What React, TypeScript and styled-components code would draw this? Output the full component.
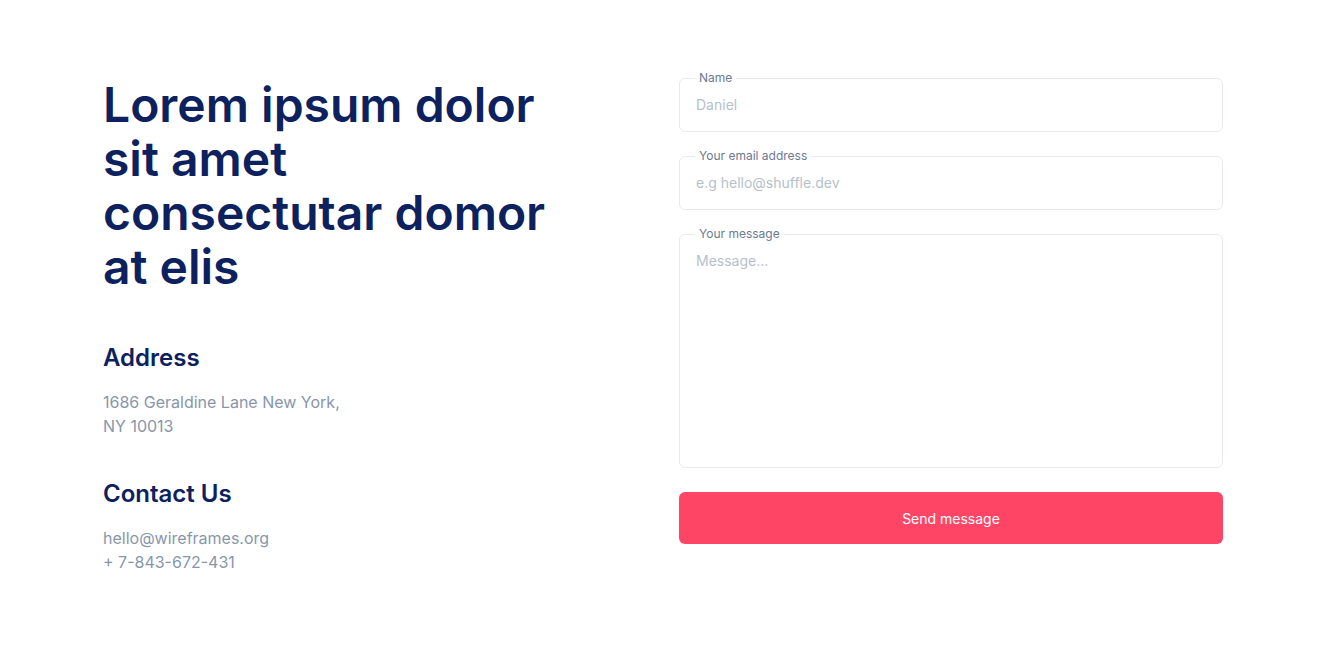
import React from "react";
import styled, { createGlobalStyle } from "styled-components";

const Global = createGlobalStyle`
  html, body { margin: 0; padding: 0; background: #ffffff; }
  body { font-family: Inter, "Noto Sans", sans-serif; -webkit-font-smoothing: antialiased; }
  * { box-sizing: border-box; }
`;

const Page = styled.section`
  display: grid;
  grid-template-columns: 1fr 544px;
  column-gap: 16px;
  width: 1120px;
  margin: 0 auto;
  padding: 70px 0 60px 0;
`;

const Info = styled.div`
  display: flex;
  flex-direction: column;
  padding-top: 8px;
`;

const Title = styled.h1`
  margin: 0 0 48px 0;
  max-width: 460px;
  font-size: 48px;
  line-height: 54px;
  font-weight: 600;
  letter-spacing: 0;
  color: #0c215e;
`;

const SubTitle = styled.h3`
  margin: 0 0 16px 0;
  font-size: 24px;
  line-height: 32px;
  font-weight: 600;
  color: #0c215e;
`;

const Text = styled.p<{ $last?: boolean }>`
  margin: 0 0 ${(p) => (p.$last ? 0 : 40)}px 0;
  font-size: 16px;
  line-height: 24px;
  color: #8896ab;
`;

const Form = styled.form`
  display: flex;
  flex-direction: column;
  gap: 16px;
`;

const Field = styled.fieldset`
  margin: 0;
  padding: 0 16px 10px 16px;
  border: 1px solid #e7eaee;
  border-radius: 6px;
  min-width: 0;
`;

const Legend = styled.legend`
  margin-left: -1px;
  padding: 0 4px;
  font-size: 12px;
  line-height: 16px;
  color: #6b7a91;
`;

const Input = styled.input`
  display: block;
  width: 100%;
  height: 35px;
  padding: 2px 0 0 0;
  border: none;
  outline: none;
  background: transparent;
  font-family: inherit;
  font-size: 14px;
  color: #0c215e;
  &::placeholder { color: #b6bfcb; }
`;

const Area = styled.textarea`
  display: block;
  width: 100%;
  height: 215px;
  padding: 9px 0 0 0;
  border: none;
  outline: none;
  resize: none;
  background: transparent;
  font-family: inherit;
  font-size: 14px;
  line-height: 20px;
  color: #0c215e;
  &::placeholder { color: #b6bfcb; }
`;

const Button = styled.button`
  margin-top: 8px;
  height: 52px;
  width: 100%;
  border: none;
  border-radius: 6px;
  background: #ff4566;
  color: #ffffff;
  font-family: inherit;
  font-size: 14px;
  font-weight: 400;
  cursor: pointer;
`;

export default function App() {
  return (
    <>
      <Global />
      <Page>
        <Info>
          <Title>Lorem ipsum dolor sit amet consectutar domor at elis</Title>
          <SubTitle>Address</SubTitle>
          <Text>
            1686 Geraldine Lane New York,
            <br />
            NY 10013
          </Text>
          <SubTitle>Contact Us</SubTitle>
          <Text $last>
            hello@wireframes.org
            <br />+ 7-843-672-431
          </Text>
        </Info>
        <Form onSubmit={(e) => e.preventDefault()}>
          <Field>
            <Legend>Name</Legend>
            <Input type="text" placeholder="Daniel" />
          </Field>
          <Field>
            <Legend>Your email address</Legend>
            <Input type="email" placeholder="e.g hello@shuffle.dev" />
          </Field>
          <Field>
            <Legend>Your message</Legend>
            <Area placeholder="Message..." />
          </Field>
          <Button type="submit">Send message</Button>
        </Form>
      </Page>
    </>
  );
}
